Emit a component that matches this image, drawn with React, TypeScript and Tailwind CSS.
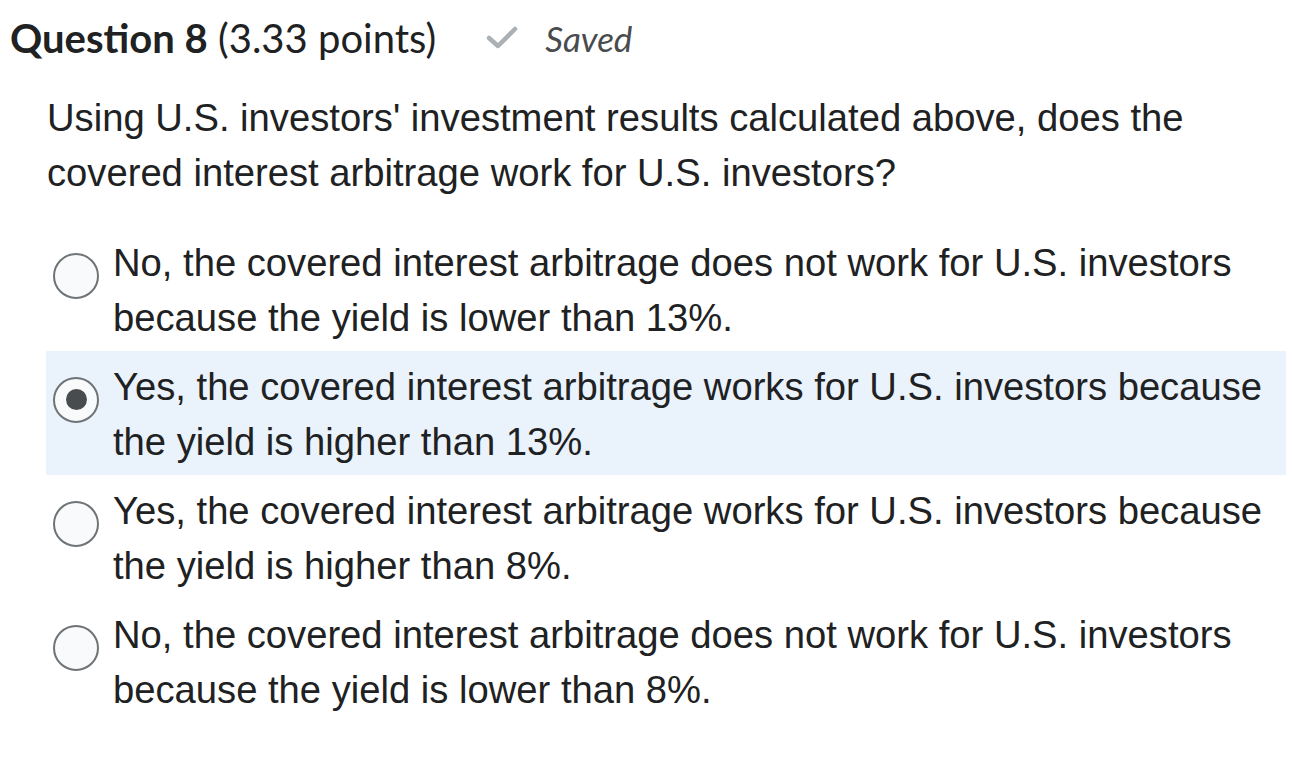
import React from "react";

const options = [
  "No, the covered interest arbitrage does not work for U.S. investors because the yield is lower than 13%.",
  "Yes, the covered interest arbitrage works for U.S. investors because the yield is higher than 13%.",
  "Yes, the covered interest arbitrage works for U.S. investors because the yield is higher than 8%.",
  "No, the covered interest arbitrage does not work for U.S. investors because the yield is lower than 8%.",
];

export default function App() {
  const selected = 1;
  return (
    <div className="w-[1292px] h-[768px] bg-white text-[#202122] overflow-hidden">
      <div className="pt-[12px] pl-[10px] flex items-center font-['Lato',sans-serif]">
        <h2 className="text-[40px] leading-[48px] text-[#202122]">
          <span className="font-bold">Question 8</span>{" "}
          <span className="font-normal">(3.33 points)</span>
        </h2>
        <div className="ml-[50px] flex items-center">
          <svg width="32" height="24" viewBox="0 0 32 24" className="mr-[27px]">
            <path d="M3 12 L12 20 L29 3" fill="none" stroke="#aab0b3" strokeWidth="4.5" strokeLinecap="round" strokeLinejoin="round" />
          </svg>
          <span className="italic text-[35px] text-[#494c4e]">Saved</span>
        </div>
      </div>
      <div className="pl-[47px] pr-[6px] mt-[25px] font-['Liberation_Sans',Arial,sans-serif] text-[38.2px] leading-[55px] text-[#202122]">
        Using U.S. investors' investment results calculated above, does the covered interest arbitrage work for U.S. investors?
      </div>
      <div className="ml-[46px] w-[1240px] mt-[27px] flex flex-col font-['Liberation_Sans',Arial,sans-serif]">
        {options.map((o, i) => (
          <div
            key={i}
            className={`flex items-start h-[124px] pl-[7px] pr-[14px] pt-[8px] ${i === selected ? "bg-[#eaf2fb]" : ""}`}
          >
            <div className="mt-[18px] w-[46px] h-[46px] shrink-0 rounded-full border-[2px] border-[#6e7376] bg-[#f9fafc] flex items-center justify-center">
              {i === selected && <div className="w-[21px] h-[21px] rounded-full bg-[#494c4e]" />}
            </div>
            <div className="ml-[14px] text-[38.2px] leading-[55px] text-[#202122]">{o}</div>
          </div>
        ))}
      </div>
    </div>
  );
}
